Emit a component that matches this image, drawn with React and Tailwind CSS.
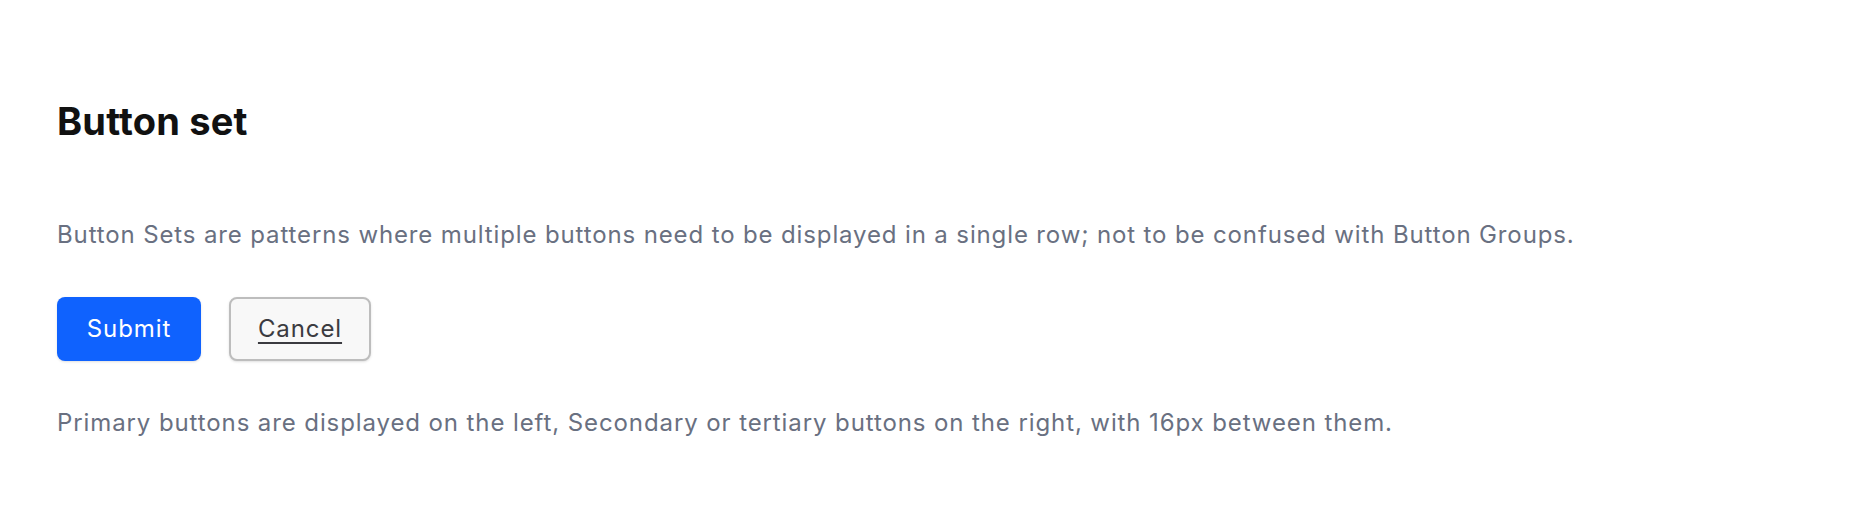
import React from 'react';

const App = () => {
  return (
    <div className="min-h-[526px] w-full bg-white pl-[57px] pt-[99px] font-['Inter',sans-serif]">
      <h1 className="text-[38px] leading-[44px] font-bold tracking-[0.2px] text-[#111111]">Button set</h1>

      <p className="mt-[76px] text-[24px] leading-[32px] tracking-[0.87px] text-[#697081]">
        Button Sets are patterns where multiple buttons need to be displayed in a single row; not to be confused with Button Groups.
      </p>

      <div className="mt-[46px] flex gap-[28px]">
        <button className="h-[64px] w-[144px] rounded-[8px] bg-[#0f62fe] text-[24px] tracking-[0.9px] text-white shadow-sm">
          Submit
        </button>
        <button className="h-[64px] w-[142px] rounded-[8px] border-2 border-[#bdbdbd] bg-[#f8f8f8] text-[24px] tracking-[0.9px] text-[#3b3b40] underline decoration-2 underline-offset-[5px] shadow-sm">
          Cancel
        </button>
      </div>

      <p className="mt-[46px] text-[24px] leading-[32px] tracking-[0.9px] text-[#697081]">
        Primary buttons are displayed on the left, Secondary or tertiary buttons on the right, with 16px between them.
      </p>
    </div>
  );
};

export default App;
